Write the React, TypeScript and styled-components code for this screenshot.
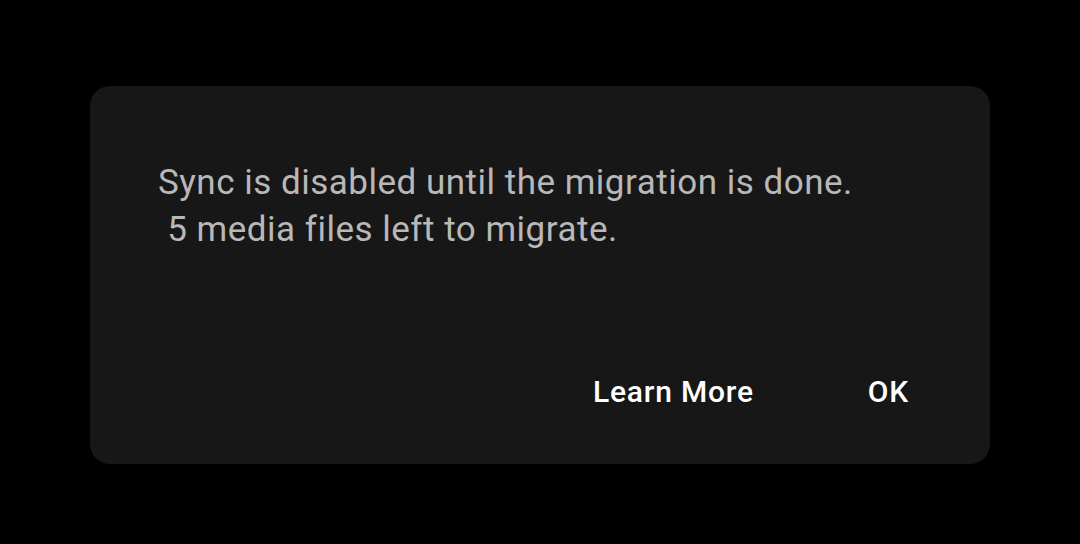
import styled, { createGlobalStyle } from "styled-components";

const GlobalStyle = createGlobalStyle`
  html, body {
    margin: 0;
    padding: 0;
    background: #000000;
    font-family: Roboto, "Liberation Sans", sans-serif;
  }
`;

const Screen = styled.div`
  width: 1080px;
  height: 544px;
  box-sizing: border-box;
  padding: 86px 90px 0;
  background: #000000;
`;

const Dialog = styled.div`
  width: 900px;
  height: 378px;
  box-sizing: border-box;
  background: #171717;
  border-radius: 20px;
  display: flex;
  flex-direction: column;
  justify-content: space-between;
  padding: 73px 0 52px 68px;
`;

const Message = styled.p`
  margin: 0;
  color: #b8b8b8;
  font-size: 35px;
  line-height: 47px;
  letter-spacing: 0.5px;
  white-space: pre-wrap;
`;

const Actions = styled.div`
  display: flex;
  justify-content: flex-end;
  align-items: center;
  padding-right: 57px;
  gap: 66px;
`;

const ActionButton = styled.button`
  background: none;
  border: none;
  padding: 0 24px;
  color: #ffffff;
  font-family: Roboto, "Liberation Sans", sans-serif;
  font-weight: 500;
  font-size: 30px;
  letter-spacing: 0.8px;
  line-height: 40px;
  cursor: pointer;
`;

export default function App() {
  return (
    <>
      <GlobalStyle />
      <Screen>
        <Dialog>
          <Message>
            {"Sync is disabled until the migration is done.\n 5 media files left to migrate."}
          </Message>
          <Actions>
            <ActionButton>Learn More</ActionButton>
            <ActionButton>OK</ActionButton>
          </Actions>
        </Dialog>
      </Screen>
    </>
  );
}
